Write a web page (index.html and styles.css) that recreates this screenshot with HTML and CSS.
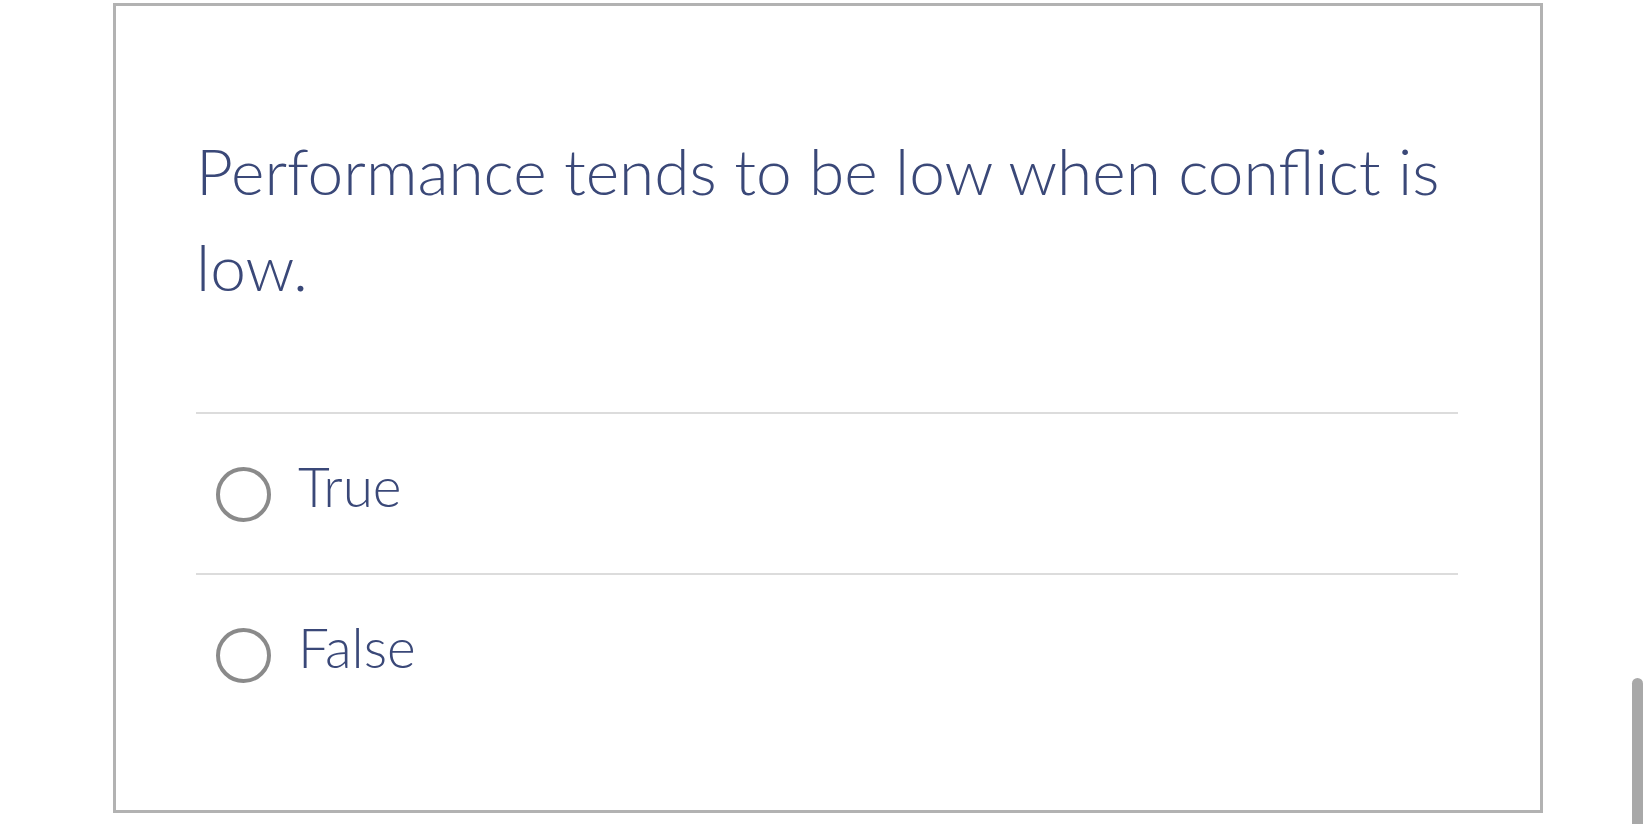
FILE: index.html
```html
<!DOCTYPE html>
<html lang="en">
<head>
<meta charset="utf-8">
<title>Quiz question</title>
<link rel="stylesheet" href="styles.css">
</head>
<body>
<div class="page">
  <div class="question-box">
    <p class="question-text">Performance tends to be low when conflict is low.</p>
    <div class="answers">
      <label class="answer">
        <span class="radio"></span>
        <span class="answer-label">True</span>
      </label>
      <label class="answer">
        <span class="radio"></span>
        <span class="answer-label">False</span>
      </label>
    </div>
  </div>
</div>
<div class="scroll-thumb"></div>
</body>
</html>
```
FILE: styles.css
```css
html, body {
  margin: 0;
  padding: 0;
  background: #ffffff;
  overflow: hidden;
}

.page {
  padding: 3px 0 0 113px;
}

.question-box {
  box-sizing: border-box;
  width: 1430px;
  height: 810px;
  border: 3px solid #b2b2b2;
  padding: 117px 82px 0 80px;
  font-family: "Lato", "Liberation Sans", sans-serif;
  font-weight: 300;
  color: #3a4878;
}

.question-text {
  margin: 0;
  font-size: 64px;
  line-height: 96px;
}

.answers {
  margin-top: 97px;
  border-top: 2px solid #dcdcdc;
}

.answer {
  display: flex;
  align-items: flex-start;
  padding: 40px 0 51px 20px;
  font-size: 55px;
  line-height: 64px;
}

.answer + .answer {
  border-top: 2px solid #dcdcdc;
}

.radio {
  box-sizing: border-box;
  flex: 0 0 auto;
  width: 55px;
  height: 55px;
  margin-top: 13px;
  border: 4px solid #8a8a8a;
  border-radius: 50%;
}

.answer-label {
  margin-left: 27px;
}

.scroll-thumb {
  position: absolute;
  left: 1632px;
  top: 678px;
  width: 11px;
  height: 160px;
  background: #a8a8a8;
  border-radius: 6px;
}
```
